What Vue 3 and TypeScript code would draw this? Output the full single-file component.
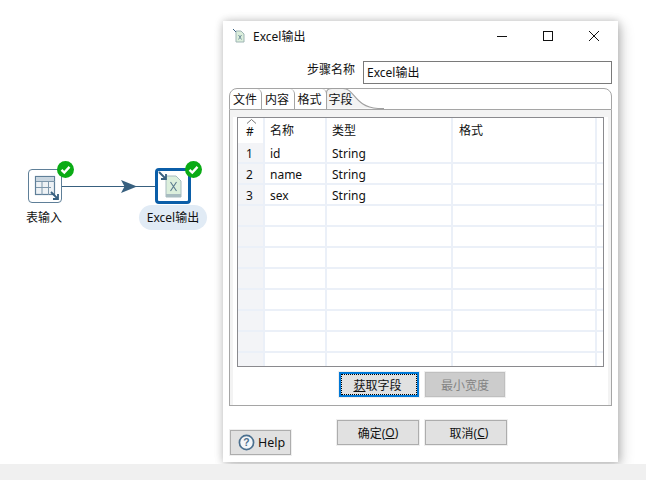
<script setup lang="ts">
interface Row { n: string; name: string; type: string }
const rows: Row[] = [
  { n: '1', name: 'id', type: 'String' },
  { n: '2', name: 'name', type: 'String' },
  { n: '3', name: 'sex', type: 'String' },
  ...Array.from({ length: 8 }, () => ({ n: '', name: '', type: '' })),
]
const tabs = ['文件', '内容', '格式']
</script>

<template>
  <div class="page">
    <div class="canvas">
      <div class="hop"></div>
      <svg class="arrow" width="20" height="14" viewBox="0 0 20 14"><path d="M0 0 L16 6.5 L0 13 L3.5 6.5 Z" fill="#38607f" /></svg>
      <div class="node n1">
        <svg width="34" height="34" viewBox="0 0 34 34">
          <rect x="6.500" y="6.500" width="19" height="18" fill="#eef2f5" stroke="#5f7f98" stroke-width="1.2" />
          <rect x="7" y="7" width="18" height="4" fill="#c9d6e0" />
          <path d="M7 11.500H26M7 17.500H22M13 11V25M19.500 11V25" stroke="#7d97ab" fill="none" />
          <path d="M22 22 L29 29 M29 24 V29 H24" stroke="#38607f" stroke-width="1.800" fill="none" />
        </svg>
        <span class="check"><svg width="17" height="17" viewBox="0 0 17 17"><circle cx="8.500" cy="8.500" r="8.500" fill="#0aab15" /><path d="M4.500 8.800 L7.300 11.500 L12.500 5.900" stroke="#fff" stroke-width="2.400" fill="none" /></svg></span>
      </div>
      <div class="label l1">表输入</div>
      <div class="node n2">
        <svg width="30" height="30" viewBox="0 0 30 30">
          <path d="M8 5 H18 L23 10 V26 H8 Z" fill="#dcefdc" stroke="#a8bcc0" />
          <path d="M8 23 H23 V26 H8 Z" fill="#a8bcc0" />
          <path d="M12.500 11 L18.500 20 M18.500 11 L12.500 20" stroke="#5a7a8e" stroke-width="1.100" fill="none" />
          <path d="M1 1 L8 8 M8 3 V8 H3" stroke="#38607f" stroke-width="1.800" fill="none" />
        </svg>
        <span class="check"><svg width="17" height="17" viewBox="0 0 17 17"><circle cx="8.500" cy="8.500" r="8.500" fill="#0aab15" /><path d="M4.500 8.800 L7.300 11.500 L12.500 5.900" stroke="#fff" stroke-width="2.400" fill="none" /></svg></span>
      </div>
      <div class="label l2">Excel输出</div>
    </div>

    <div class="dialog">
      <div class="titlebar">
        <svg class="appicon" width="12" height="14" viewBox="0 0 12 14">
          <path d="M3 2 H8 L11 5 V13 H3 Z" fill="#dcefdc" stroke="#9fb5b5" />
          <path d="M5.500 6 L8.500 10.500 M8.500 6 L5.500 10.500" stroke="#5a7a8e" fill="none" stroke-width=".8" />
          <path d="M0 0 L3 3" stroke="#38607f" fill="none" />
        </svg>
        <span class="title">Excel输出</span>
        <div class="winbtns">
          <svg width="12" height="12" viewBox="0 0 12 12"><path d="M1 6.500H11" stroke="#111" /></svg>
          <svg width="12" height="12" viewBox="0 0 12 12"><rect x="1.500" y="1.500" width="9" height="9" fill="none" stroke="#111" /></svg>
          <svg width="12" height="12" viewBox="0 0 12 12"><path d="M1 1 L11 11 M11 1 L1 11" stroke="#111" fill="none" /></svg>
        </div>
      </div>

      <div class="stepline">
        <span class="steplabel">步骤名称</span>
        <div class="stepinput">Excel输出</div>
      </div>

      <div class="folder">
        <div class="tabs">
          <svg class="curve" width="58" height="22" viewBox="0 0 58 22"><path d="M.5 21 V5 Q.5 .5 6 .5 H17 C29 .5 28 19 52 20.500 H.5 Z" fill="#f3f3f3" /><path d="M.5 21 V5 Q.5 .5 6 .5 H17 C29 .5 28 19 52 20.500 H58" fill="none" stroke="#a0a0a0" stroke-width="1.100" /></svg>
          <div v-for="t in tabs" :key="t" class="tab">{{ t }}</div>
          <div class="tab active">字段</div>
        </div>
        <div class="panel">
          <div class="table">
            <div class="thead">
              <div class="cell hnum"><svg class="sort" width="11" height="5" viewBox="0 0 11 5"><path d="M1 4.500 L5.500 .5 L10 4.500" fill="none" stroke="#777" /></svg>#</div>
              <div class="cell">名称</div>
              <div class="cell">类型</div>
              <div class="cell fmt">格式</div>
              <div class="cell"></div>
            </div>
            <div class="tbody">
              <div v-for="(r, i) in rows" :key="i" class="trow">
                <div class="cell num">{{ r.n }}</div>
                <div class="cell">{{ r.name }}</div>
                <div class="cell">{{ r.type }}</div>
                <div class="cell"></div>
                <div class="cell"></div>
              </div>
            </div>
          </div>
          <div class="tablebtns">
            <div class="btn focus"><span class="dots"><u>获</u>取字段</span></div>
            <div class="btn disabled">最小宽度</div>
          </div>
        </div>
      </div>

      <div class="footer">
        <div class="btn help">
          <svg width="17" height="17" viewBox="0 0 18 18"><circle cx="9" cy="9" r="7.500" fill="#f4f6f8" stroke="#4b708f" stroke-width="1.800" /><text x="9" y="13" text-anchor="middle" font-size="11" font-weight="700" font-family="Liberation Sans" fill="#4b708f">?</text></svg>
          <span>Help</span>
        </div>
        <div class="mainbtns">
          <div class="btn ok">确定(<u>O</u>)</div>
          <div class="btn ok cancel">取消(<u>C</u>)</div>
        </div>
      </div>
    </div>

    <div class="strip"></div>
  </div>
</template>

<style scoped>
.page {
  position: relative;
  width: 646px;
  height: 480px;
  overflow: hidden;
  background: #fff;
  font-family: "Noto Sans", "Noto Sans CJK SC", sans-serif;
  font-size: 12px;
  color: #111;
}
.strip { position: absolute; left: 0; right: 0; top: 464px; bottom: 0; background: #f0f0f0; }
.canvas { position: absolute; inset: 0; }
.hop { position: absolute; left: 62px; top: 186px; width: 94px; height: 1px; background: #38607f; }
.arrow { position: absolute; left: 121px; top: 180px; }
.node { position: absolute; box-sizing: border-box; display: flex; align-items: center; justify-content: center; background: #fff; }
.n1 { left: 28px; top: 169px; width: 34px; height: 34px; border: 1px solid #5f7f98; border-radius: 4px; }
.n1 svg { position: absolute; left: 0; top: 0; }
.n2 { left: 155px; top: 168px; width: 36px; height: 36px; border: 3px solid #0b5ea8; border-radius: 4px; }
.check { position: absolute; width: 17px; height: 17px; }
.n1 .check { left: 28px; top: -9px; }
.n2 .check { left: 27px; top: -10px; }
.check svg { display: block; position: static; }
.label { position: absolute; font-size: 12px; line-height: 16px; text-align: center; color: #111; }
.l1 { left: 14px; top: 210px; width: 60px; }
.l2 { left: 139px; top: 205px; width: 68px; height: 25px; line-height: 26px; background: #e1ebf5; border-radius: 13px; }

.dialog {
  position: absolute;
  left: 223px;
  top: 21px;
  width: 395px;
  height: 441px;
  box-sizing: border-box;
  background: #fff;
  box-shadow: 0 0 8px rgba(0, 0, 0, .22), 4px 4px 12px rgba(0, 0, 0, .18);
  display: flex;
  flex-direction: column;
  padding: 0 6px 0 6px;
}
.titlebar { height: 31px; display: flex; align-items: center; flex: none; position: relative; }
.appicon { margin: 0 8px 2px 4px; }
.title { font-size: 12px; margin-bottom: 1px; }
.winbtns { margin-left: auto; display: flex; gap: 34px; margin-right: 12px; margin-bottom: 2px; }
.winbtns svg { display: block; }
.stepline { display: flex; align-items: center; height: 23px; margin-top: 9px; flex: none; }
.steplabel { width: 126px; text-align: right; padding-bottom: 5px; line-height: 16px; }
.stepinput {
  margin-left: 8px;
  box-sizing: border-box;
  width: 249px;
  height: 23px;
  border: 1px solid #7a7a7a;
  line-height: 21px;
  padding-left: 3px;
}
.folder { margin-top: 4px; width: 383px; flex: none; }
.tabs {
  display: flex;
  height: 22px;
  position: relative;
  box-sizing: border-box;
  border: 1px solid #a5a5a5;
  border-radius: 8px 8px 0 0;
}
.tab {
  box-sizing: border-box;
  width: 32px;
  border-right: 1px solid #a5a5a5;
  text-align: center;
  line-height: 22px;
  border-radius: 5px 5px 0 0;
  position: relative;
  padding-right: 1px;
}
.tab:nth-child(3) { width: 33px; padding-right: 2px; }
.tab:nth-child(4) { padding-right: 2px; }
.tab.active { border-right: none; width: 30px; padding-right: 3px; padding-left: 0; }
.curve { position: absolute; left: 96px; top: -1px; }
.panel {
  box-sizing: border-box;
  height: 296px;
  background: #fff;
  border: 1px solid #a5a5a5;
  border-top: none;
  padding: 7px 7px 0 7px;
  box-shadow: inset 0 7px 0 #f3f3f3, inset 3px 0 0 #f3f3f3, inset -3px 0 0 #f3f3f3;
}
.table {
  box-sizing: border-box;
  width: 367px;
  height: 250px;
  border: 1px solid #8a8a8e;
  background: #fff;
  overflow: hidden;
}
.thead, .trow { display: grid; grid-template-columns: 27px 62px 126px 144px 6px; }
.thead { height: 25px; }
.trow { height: 21px; }
.cell {
  box-sizing: border-box;
  padding-left: 5px;
  border-right: 2px solid #ebf0f8;
  line-height: 21px;
  white-space: nowrap;
  font-size: 12px;
}
.thead .cell { line-height: 25px; height: 25px; position: relative; }
.thead .fmt { padding-left: 6px; }
.trow .cell { border-bottom: 2px solid #ebf0f8; line-height: 21px; height: 21px; }
.cell:last-child { border-right: none; }
.thead .hnum { padding-left: 8px; line-height: 27px; }
.num { background: #f3f4f7; }
.trow .num { padding-left: 8px; }
.sort { position: absolute; left: 8px; top: 1px; }
.tablebtns { display: flex; justify-content: flex-start; gap: 6px; margin: 5px 0 0 102px; }
.btn {
  box-sizing: border-box;
  background: #e1e1e1;
  border: 1px solid #adadad;
  outline: 1px solid #efefef;
  display: flex;
  align-items: center;
  justify-content: center;
  color: #111;
}
.tablebtns .btn { width: 80px; height: 25px; }
.focus { border: 2px solid #0078d7; }
.dots { display: flex; align-items: center; justify-content: center; width: 76px; height: 21px; box-sizing: border-box; border: 1px dotted #000; padding-right: 3px; }
.disabled { background: #ccc; border-color: #bfbfbf; color: #838383; }
.footer { position: relative; flex: 1; display: flex; align-items: flex-end; justify-content: space-between; }
.help { width: 61px; height: 25px; margin: 0 0 7px 1px; gap: 3px; justify-content: flex-start; padding-left: 7px; font-size: 12.5px; }
.help svg { flex: none; }
.mainbtns { position: absolute; left: 108px; top: 14px; display: flex; gap: 6px; }
.ok { width: 82px; height: 25px; }
.cancel { padding-left: 6px; }
</style>
